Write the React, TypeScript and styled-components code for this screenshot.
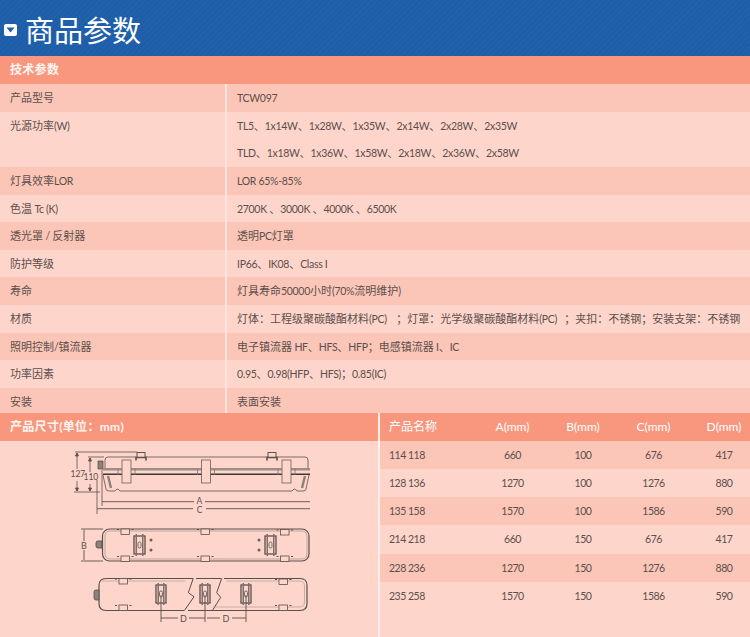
import React from "react";
import styled, { createGlobalStyle } from "styled-components";

const FONT = `Lato, "Noto Sans CJK SC", sans-serif`;

const GlobalStyle = createGlobalStyle`
  html, body {
    margin: 0;
    padding: 0;
    background: #fed5cb;
  }
`;

const SPage = styled.div`
  width: 750px;
  height: 637px;
  overflow: hidden;
  font-family: ${FONT};
  font-size: 11px;
  color: #5c4f4b;
`;

const STitleBar = styled.div`
  height: 56px;
  display: flex;
  align-items: center;
  gap: 8px;
  padding: 1px 0 0 4px;
  box-sizing: border-box;
  color: #fff;
  font-size: 29px;
  background: repeating-linear-gradient(135deg, #1e5ea9 0 2px, #2161ac 2px 4px);

  svg {
    margin-top: 3px;
  }
`;

const SSectionBar = styled.div`
  height: 28px;
  line-height: 28px;
  padding-left: 10px;
  background: #f9967e;
  color: #fff6f2;
  font-size: 12px;
  font-weight: 700;
  letter-spacing: 0.3px;
`;

const SRow = styled.div<{ $dark: boolean; $height: number }>`
  display: grid;
  grid-template-columns: 225px 2px 1fr;
  height: ${(p) => p.$height}px;
  background: ${(p) => (p.$dark ? "#fbc6b8" : "#fed5cb")};
`;

const SLabel = styled.div`
  padding-left: 10px;
  height: 27.6px;
  line-height: 27.6px;
`;

const SDivider = styled.div`
  background: #ffe4dd;
`;

const SValue = styled.div`
  padding-left: 10px;
  height: 27.6px;
  white-space: pre;
  line-height: 27.6px;
`;

const SLatin = styled.span`
  font-size: 10.5px;
  letter-spacing: -0.3px;
`;

const SBottom = styled.div`
  display: grid;
  grid-template-columns: 378px 2px 370px;
  height: 224px;
`;

const SSeparator = styled.div`
  background: #fff0ec;
`;

const SPanel = styled.div`
  min-width: 0;
`;

const SDrawing = styled.svg`
  display: block;
`;

const SSizeRow = styled.div<{ $dark?: boolean; $head?: boolean }>`
  display: grid;
  grid-template-columns: 97px 71px 70px 71px 61px;
  height: ${(p) => (p.$head ? 28 : 28.2)}px;
  line-height: ${(p) => (p.$head ? 28 : 29)}px;
  background: ${(p) => (p.$head ? "#f9967e" : p.$dark ? "#fbc6b8" : "#fed5cb")};
  color: ${(p) => (p.$head ? "#fff" : "#5c4f4b")};
  font-size: ${(p) => (p.$head ? 12 : 10.5)}px;
  letter-spacing: ${(p) => (p.$head ? 0 : -0.5)}px;
`;

const SName = styled.div`
  padding-left: 9px;
`;

const SNum = styled.div`
  text-align: center;

  &:last-child {
    padding-left: 9px;
  }
`;

const specs = [
  { label: "产品型号", values: ["TCW097"] },
  {
    label: "光源功率(W)",
    values: [
      "TL5、1x14W、1x28W、1x35W、2x14W、2x28W、2x35W",
      "TLD、1x18W、1x36W、1x58W、2x18W、2x36W、2x58W",
    ],
  },
  { label: "灯具效率LOR", values: ["LOR 65%-85%"] },
  { label: "色温 Tc (K)", values: ["2700K 、3000K 、4000K 、6500K"] },
  { label: "透光罩 / 反射器", values: ["透明PC灯罩"] },
  { label: "防护等级", values: ["IP66、IK08、Class I"] },
  { label: "寿命", values: ["灯具寿命50000小时(70%流明维护)"] },
  {
    label: "材质",
    values: ["灯体：工程级聚碳酸酯材料(PC)    ；灯罩：光学级聚碳酸酯材料(PC)   ；夹扣：不锈钢；安装支架：不锈钢"],
  },
  { label: "照明控制/镇流器", values: ["电子镇流器 HF、HFS、HFP；电感镇流器 I、IC"] },
  { label: "功率因素", values: ["0.95、0.98(HFP、HFS)；0.85(IC)"] },
  { label: "安装", values: ["表面安装"] },
];

const sizes = [
  ["114 118", "660", "100", "676", "417"],
  ["128 136", "1270", "100", "1276", "880"],
  ["135 158", "1570", "100", "1586", "590"],
  ["214 218", "660", "150", "676", "417"],
  ["228 236", "1270", "150", "1276", "880"],
  ["235 258", "1570", "150", "1586", "590"],
];

// latin runs are set tighter than the chinese, the original uses a narrow gill-like face
const Mixed = ({ text }: { text: string }) => (
  <>
    {text.split(/([\x20-\x7e]+)/).map((part, i) =>
      i % 2 === 1 ? <SLatin key={i}>{part}</SLatin> : part
    )}
  </>
);

const TitleIcon = () => (
  <svg width="13" height="12" viewBox="0 0 13 12">
    <rect width="13" height="12" rx="2" fill="#fff" />
    <path d="M2.500 3.500h8L6.500 8.500z" fill="#1e5ea9" />
  </svg>
);

// y of the viewBox is the page y, so the numbers read straight off the screenshot
const Bracket = ({ x, y, w, h }: { x: number; y: number; w: number; h: number }) => (
  <g>
    <rect x={x} y={y + 2} width={w} height={h - 4} fill="none" stroke="#5a504c" strokeWidth="1.3" />
    <rect x={x + 1.5} y={y} width="1.5" height={h} fill="#7d716c" />
    <rect x={x + w - 3} y={y} width="1.5" height={h} fill="#7d716c" />
    <rect x={x + w / 2 - 1.5} y={y + h / 2 - 3} width="3" height="6" rx="1.5" fill="#fed5cb" stroke="#5a504c" strokeWidth="0.8" />
  </g>
);

const Tab = ({ x, y }: { x: number; y: number }) => (
  <g>
    <rect x={x} y={y} width="8.5" height="5.5" fill="#fed5cb" stroke="#5a504c" strokeWidth="0.8" />
    <path d={`M${x - 4} ${y + 0.5}h2M${x + 10.5} ${y + 0.5}h2`} stroke="#5a504c" strokeWidth="1" />
  </g>
);

const Strap = ({ x }: { x: number }) => (
  <g>
    <path d={`M${x - 4} 469v6M${x + 13} 469v6`} stroke="#7d716c" strokeWidth="0.8" fill="none" />
    <rect x={x} y="460" width="9" height="23" fill="#fed5cb" stroke="#6a5f5a" strokeWidth="0.8" />
  </g>
);

const Clip = ({ x }: { x: number }) => (
  <g fill="none" stroke="#5a504c" strokeWidth="1">
    <rect x={x + 1} y="452.5" width="8" height="5" fill="#fed5cb" />
    <path d={`M${x} 460.5v-3h10v3`} strokeWidth="1.6" />
  </g>
);

const LampDrawing = () => (
  <SDrawing width="378" height="196" viewBox="0 441 378 196">
    <g fill="none" stroke="#5a504c" strokeWidth="0.8">
      {/* side view */}
      <path d="M75 452h62M74 492h26M88 457h16M77 453v16M77 481v10M90 458v14M90 484v7" />
      <path d="M102 470v36M97 480v34" />
      <path d="M105 469v-9q0-3 3-3h197q3 0 3 3v9" />
      <path d="M103 475l3 14q0 2 3 2h6q1-2 3-2l2 2h172l2-2q2 0 3 2h6q3 0 3-2l3-14" />
      <path d="M108 476l3 12M305 476l-3 12" stroke="#8d817c" strokeWidth="2.4" />
      <path d="M98 461h5v8h-5z" fill="#8d817c" />
    </g>
    <rect x="103" y="468" width="207" height="2.5" fill="#9c8f8a" />
    <rect x="103" y="473.5" width="207" height="1.5" fill="#3f3633" />
    <Strap x={122} />
    <Strap x={201.5} />
    <Strap x={282} />
    <Clip x={136} />
    <Clip x={267} />
    <g fill="none" stroke="#5a504c" strokeWidth="0.9">
      <path d="M102 501.700h92M205 501.700h105M97 508.700h96M206 508.700h104" />
      <path d="M77 453l-1.500 3h3zM77 491l-1.500-3h3zM90 458l-1.500 3h3zM90 491l-1.500-3h3z" fill="#5a504c" />
    </g>
    <g fill="#5c4f4b" fontFamily="Lato, sans-serif" fontSize="9">
      <text x="70.500" y="476.500" fontSize="8.500">127</text>
      <text x="83.500" y="479.500" fontSize="8.500">110</text>
      <text x="199.500" y="503.500" textAnchor="middle" fontSize="8.500">A</text>
      <text x="199.500" y="512.800" textAnchor="middle" fontSize="8.500">C</text>
      <text x="84" y="549" textAnchor="middle">B</text>
      <text x="183.500" y="621.500" textAnchor="middle">D</text>
      <text x="226" y="621.500" textAnchor="middle">D</text>
    </g>

    {/* top view */}
    <g fill="none" stroke="#5a504c" strokeWidth="0.9">
      <rect x="102.500" y="529" width="206.500" height="32" rx="7" strokeWidth="1.2" />
      <rect x="105" y="531" width="202" height="28" rx="5" stroke="#a09490" strokeWidth="0.7" />
      <path d="M81 529h22M81 561h22M84 530v11M84 550v10" />
      <path d="M102 541h-4q-2 0-2 2v3q0 2 2 2h4z" fill="#8d817c" />
    </g>
    <Tab x={121} y={529} />
    <Tab x={201} y={529} />
    <Tab x={280.5} y={529.5} />
    <Tab x={121} y={556} />
    <Tab x={201} y={556} />
    <Tab x={280.5} y={556} />
    <Bracket x={134} y={534} w={11} h={22} />
    <Bracket x={265} y={534} w={11} h={22} />
    <g fill="#6a5f5a">
      <circle cx="151" cy="540" r="1.500" />
      <circle cx="151" cy="550" r="1.500" />
      <circle cx="259" cy="540" r="1.500" />
      <circle cx="259" cy="550" r="1.500" />
    </g>

    {/* long version, broken in two places */}
    <g fill="none" stroke="#5a504c" strokeWidth="1.2">
      <path d="M193 578.500H106q-7 0-7 7v18q0 7 7 7h78M196 578.500h25M224 578.500h76q7 0 7 7v18q0 7-7 7h-88M188 610.500h24" />
      <path d="M193.300 578.300l-5 14.400 5.700 4-9.700 14M221.700 578.300l-5 14.400 4 4.600-8.400 13.400" strokeWidth="1" />
      <path d="M101.500 581h84M226 581h73q5.500 0 5.500 5v16q0 5-5.500 5h-86" stroke="#a09490" strokeWidth="0.6" />
      <path d="M99 590h-3q-2 0-2 2v6q0 2 2 2h3z" fill="#8d817c" strokeWidth="0.8" />
    </g>
    <Tab x={119} y={578.5} />
    <Tab x={119} y={605} />
    <Tab x={279} y={579} />
    <Tab x={279} y={605} />
    <Bracket x={156} y={583} w={10} h={22} />
    <Bracket x={200} y={583} w={10} h={22} />
    <Bracket x={241} y={583} w={10} h={22} />
    <g fill="none" stroke="#5a504c" strokeWidth="0.9">
      <path d="M161 595v27M205 595v27M246 595v27" />
      <path d="M161 618h17M189 618h16M207 618h13M232 618h14" />
    </g>
  </SDrawing>
);

const App = () => {
  return (
    <SPage>
      <GlobalStyle />
      <STitleBar>
        <TitleIcon />
        商品参数
      </STitleBar>
      <SSectionBar>技术参数</SSectionBar>
      {specs.map((row, i) => (
        <SRow
          key={row.label}
          $dark={i % 2 === 0}
          $height={i === specs.length - 1 ? 25 : 27.64 * row.values.length}
        >
          <SLabel>
            <Mixed text={row.label} />
          </SLabel>
          <SDivider />
          <div>
            {row.values.map((v) => (
              <SValue key={v}>
                <Mixed text={v} />
              </SValue>
            ))}
          </div>
        </SRow>
      ))}
      <SBottom>
        <SPanel>
          <SSectionBar>产品尺寸(单位：mm)</SSectionBar>
          <LampDrawing />
        </SPanel>
        <SSeparator />
        <SPanel>
          <SSizeRow $head>
            <SName>产品名称</SName>
            <SNum>A(mm)</SNum>
            <SNum>B(mm)</SNum>
            <SNum>C(mm)</SNum>
            <SNum>D(mm)</SNum>
          </SSizeRow>
          {sizes.map((row, i) => (
            <SSizeRow key={row[0]} $dark={i % 2 === 0}>
              <SName>{row[0]}</SName>
              {row.slice(1).map((n, j) => (
                <SNum key={j}>{n}</SNum>
              ))}
            </SSizeRow>
          ))}
        </SPanel>
      </SBottom>
    </SPage>
  );
};

export default App;
